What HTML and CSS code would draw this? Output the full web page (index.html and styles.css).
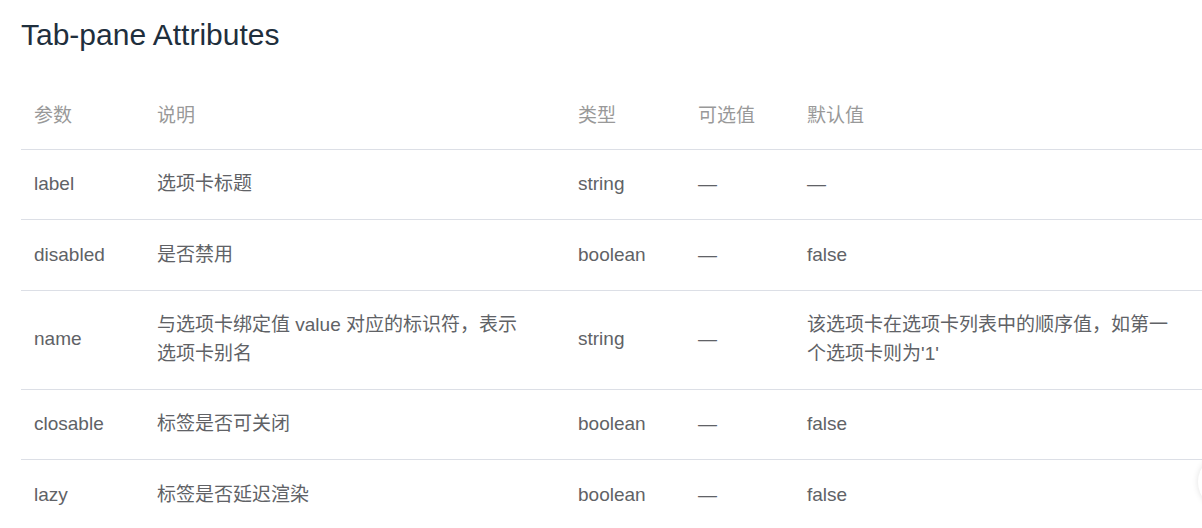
FILE: index.html
```html
<!DOCTYPE html>
<html lang="zh-CN">
<head>
<meta charset="utf-8">
<title>Tab-pane Attributes</title>
<link rel="stylesheet" href="styles.css">
</head>
<body>
<main class="page">
  <h3 class="title">Tab-pane Attributes</h3>
  <table class="attrs">
    <colgroup>
      <col class="c-param">
      <col class="c-desc">
      <col class="c-type">
      <col class="c-opts">
      <col class="c-def">
    </colgroup>
    <thead>
      <tr><th>参数</th><th>说明</th><th>类型</th><th>可选值</th><th>默认值</th></tr>
    </thead>
    <tbody>
      <tr><td>label</td><td>选项卡标题</td><td>string</td><td>—</td><td>—</td></tr>
      <tr><td>disabled</td><td>是否禁用</td><td>boolean</td><td>—</td><td>false</td></tr>
      <tr><td>name</td><td>与选项卡绑定值 value 对应的标识符，表示选项卡别名</td><td>string</td><td>—</td><td>该选项卡在选项卡列表中的顺序值，如第一个选项卡则为'1'</td></tr>
      <tr><td>closable</td><td>标签是否可关闭</td><td>boolean</td><td>—</td><td>false</td></tr>
      <tr><td>lazy</td><td>标签是否延迟渲染</td><td>boolean</td><td>—</td><td>false</td></tr>
    </tbody>
  </table>
</main>
<div class="back-top" aria-hidden="true"></div>
</body>
</html>
```
FILE: styles.css
```css
html, body {
  margin: 0;
  padding: 0;
  background: #fff;
  overflow: hidden;
}
body {
  font-family: "Liberation Sans", Arial, "Noto Sans CJK SC", sans-serif;
}
.page {
  padding: 18px 0 0 21px;
}
.title {
  margin: 0 0 27px;
  font-size: 30px;
  font-weight: normal;
  line-height: normal;
  color: #1f2f3d;
}
.attrs {
  width: 100%;
  border-collapse: collapse;
  table-layout: fixed;
  font-size: 19px;
  line-height: 1.5;
}
.c-param { width: 116px; }
.c-desc { width: 421px; }
.c-type { width: 120px; }
.c-opts { width: 109px; }
.attrs th,
.attrs td {
  text-align: left;
  vertical-align: middle;
  padding: 20.5px 20px;
  border-bottom: 1px solid #dcdfe6;
  font-weight: normal;
}
.attrs th {
  padding-top: 22.5px;
  padding-bottom: 18.5px;
  color: #999;
  white-space: nowrap;
}
.attrs th:first-child,
.attrs td:first-child {
  padding-left: 13px;
}
.attrs td:nth-child(2) {
  padding-right: 24px;
}
.attrs td {
  color: #606266;
}
.back-top {
  position: fixed;
  left: 1198px;
  top: 454px;
  width: 56px;
  height: 56px;
  border-radius: 50%;
  background: #fff;
  box-shadow: 0 0 6px rgba(0, 0, 0, 0.12);
}
```
